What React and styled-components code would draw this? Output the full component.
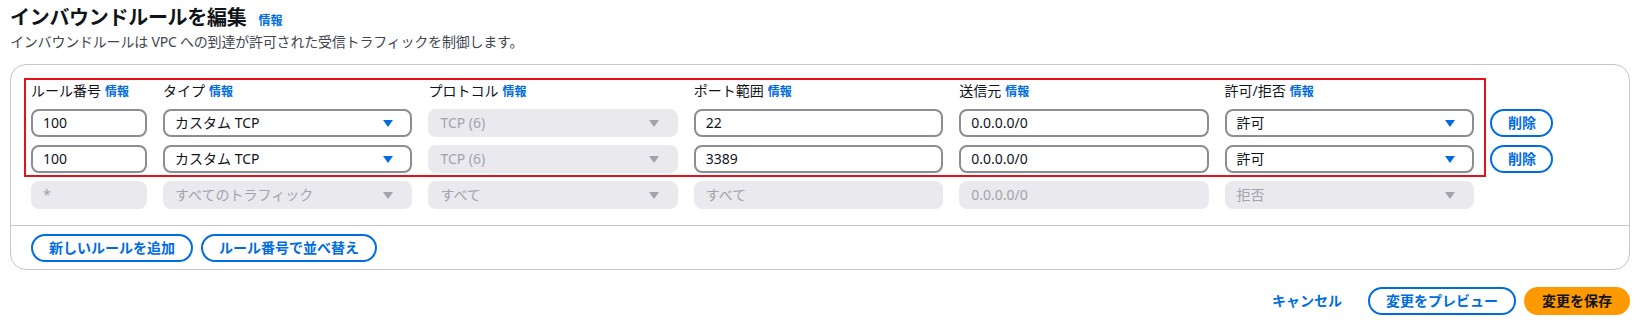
import React from "react";
import styled, { createGlobalStyle } from "styled-components";

const Global = createGlobalStyle`
  html, body { margin: 0; padding: 0; background: #ffffff; }
  body {
    font-family: "Noto Sans", "Noto Sans CJK JP", sans-serif;
    color: #0f141a;
    -webkit-font-smoothing: antialiased;
  }
`;

const BLUE = "#006ce0";

const Page = styled.div`
  padding: 6px 13px 0 10px;
  width: 1643px;
  box-sizing: border-box;
`;

const TitleRow = styled.div`
  display: flex;
  align-items: baseline;
  gap: 12px;
`;

const Title = styled.h2`
  margin: 0;
  font-size: 20px;
  line-height: 24px;
  font-weight: 700;
  letter-spacing: -0.3px;
`;

const Info = styled.span`
  color: ${BLUE};
  font-size: 12px;
  font-weight: 700;
  line-height: 16px;
`;

const Subtitle = styled.p`
  margin: 2px 0 0;
  font-size: 14px;
  line-height: 20px;
  color: #424650;
  letter-spacing: -0.2px;
`;

const Panel = styled.section`
  margin-top: 12px;
  border: 1px solid #c6c6cd;
  border-radius: 16px;
  box-sizing: border-box;
`;

const RulesArea = styled.div`
  position: relative;
  padding: 16px 20px 16px 20px;
`;

const Grid = styled.div`
  display: grid;
  grid-template-columns: 116px repeat(5, 249.4px) 63px;
  column-gap: 16px;
  row-gap: 8px;
  align-items: center;
`;

const Label = styled.div`
  display: flex;
  align-items: baseline;
  gap: 4px;
  font-size: 14px;
  line-height: 20px;
  height: 20px;
  white-space: nowrap;
`;

const Field = styled.div`
  box-sizing: border-box;
  height: 28px;
  display: flex;
  align-items: center;
  justify-content: space-between;
  padding: 0 17px 0 10px;
  border-radius: 8px;
  border: 2px solid ${(p) => (p.$disabled ? "#e9e9ee" : "#8c8c94")};
  background: ${(p) => (p.$disabled ? "#e9e9ee" : "#ffffff")};
  color: ${(p) => (p.$disabled ? "#a3a3ad" : "#0f141a")};
  font-size: 14px;
  line-height: 20px;
  white-space: nowrap;
`;

const Arrow = styled.span`
  width: 0;
  height: 0;
  border-left: 5px solid transparent;
  border-right: 5px solid transparent;
  border-top: 7px solid ${(p) => (p.$disabled ? "#a3a3ad" : BLUE)};
`;

const Button = styled.button`
  box-sizing: border-box;
  height: 28px;
  padding: 0 16px;
  border-radius: 20px;
  border: 2px solid ${(p) =>
    p.$variant === "primary" ? "#ff9900" : p.$variant === "link" ? "transparent" : BLUE};
  background: ${(p) => (p.$variant === "primary" ? "#ff9900" : "#ffffff")};
  color: ${(p) => (p.$variant === "primary" ? "#0f141a" : BLUE)};
  font-family: inherit;
  font-size: 14px;
  font-weight: 700;
  line-height: 20px;
  white-space: nowrap;
  cursor: pointer;
`;

const Highlight = styled.div`
  position: absolute;
  left: 13px;
  top: 13px;
  width: 1462px;
  height: 99px;
  box-sizing: border-box;
  border: 2px solid #e3121b;
  pointer-events: none;
`;

const PanelFooter = styled.div`
  display: flex;
  gap: 8px;
  padding: 8px 20px 7px;
  border-top: 1px solid #c6c6cd;
`;

const PageActions = styled.div`
  display: flex;
  justify-content: flex-end;
  gap: 8px;
  margin-top: 17px;
`;

const headers = ["ルール番号", "タイプ", "プロトコル", "ポート範囲", "送信元", "許可/拒否"];

const rules = [
  { num: "100", type: "カスタム TCP", proto: "TCP (6)", port: "22", src: "0.0.0.0/0", action: "許可" },
  { num: "100", type: "カスタム TCP", proto: "TCP (6)", port: "3389", src: "0.0.0.0/0", action: "許可" },
];

const Select = ({ value, disabled }) => (
  <Field $disabled={disabled}>
    <span>{value}</span>
    <Arrow $disabled={disabled} />
  </Field>
);

export default function App() {
  return (
    <>
      <Global />
      <Page>
        <TitleRow>
          <Title>インバウンドルールを編集</Title>
          <Info>情報</Info>
        </TitleRow>
        <Subtitle>インバウンドルールは VPC への到達が許可された受信トラフィックを制御します。</Subtitle>
        <Panel>
          <RulesArea>
            <Grid>
              {headers.map((h) => (
                <Label key={h}>
                  {h}
                  <Info>情報</Info>
                </Label>
              ))}
              <div />
              {rules.map((r, i) => (
                <React.Fragment key={i}>
                  <Field>{r.num}</Field>
                  <Select value={r.type} />
                  <Select value={r.proto} disabled />
                  <Field>{r.port}</Field>
                  <Field>{r.src}</Field>
                  <Select value={r.action} />
                  <Button>削除</Button>
                </React.Fragment>
              ))}
              <Field $disabled>*</Field>
              <Select value="すべてのトラフィック" disabled />
              <Select value="すべて" disabled />
              <Field $disabled>すべて</Field>
              <Field $disabled>0.0.0.0/0</Field>
              <Select value="拒否" disabled />
              <div />
            </Grid>
            <Highlight />
          </RulesArea>
          <PanelFooter>
            <Button>新しいルールを追加</Button>
            <Button>ルール番号で並べ替え</Button>
          </PanelFooter>
        </Panel>
        <PageActions>
          <Button $variant="link">キャンセル</Button>
          <Button>変更をプレビュー</Button>
          <Button $variant="primary">変更を保存</Button>
        </PageActions>
      </Page>
    </>
  );
}
